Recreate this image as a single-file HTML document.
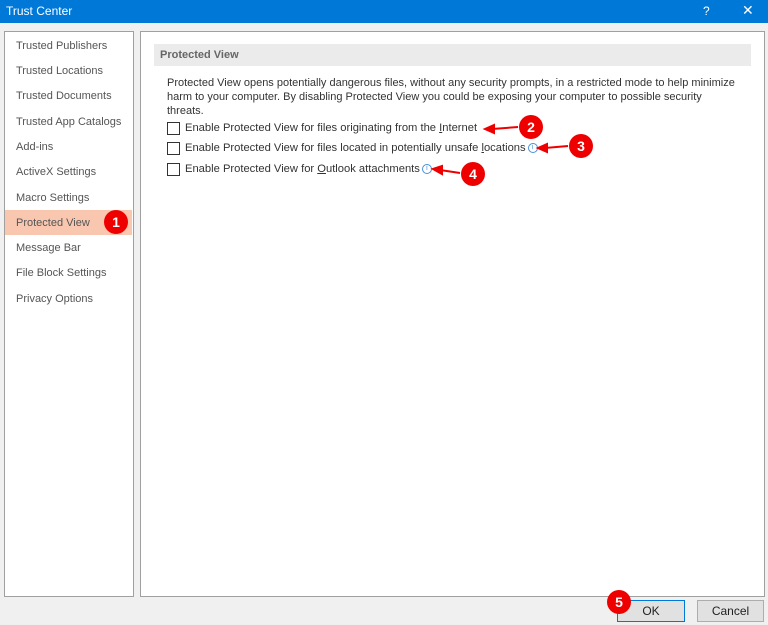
<!DOCTYPE html>
<html><head><style>
body{margin:0;width:768px;height:625px;background:#f0f0f0;font-family:"Liberation Sans",sans-serif;font-size:11px;color:#222;position:relative;overflow:hidden}
.t{position:absolute;left:0;top:0;width:768px;height:23px;background:#0078d7;color:#fff;font-size:12px}
.p{position:absolute;background:#fff;border:1px solid #a0a0a0}
.nav{position:absolute;left:16px;color:#555;font-size:11px}
.a{position:absolute;color:#333;white-space:nowrap}
.x{font-size:11.2px}
.cb{position:absolute;width:11px;height:11px;border:1px solid #333;background:#fff}
.c{position:absolute;width:24px;height:24px;border-radius:50%;background:#e00;color:#fff;font-weight:bold;font-size:14px;text-align:center;line-height:24px}
.i{display:inline-block;width:8px;height:8px;border:1px solid #4a90d9;border-radius:50%;font-size:7px;line-height:8px;text-align:center;color:#4a90d9;vertical-align:2px;margin-left:2px}
.b{position:absolute;top:600px;height:20px;border:1px solid #adadad;background:#e1e1e1;text-align:center;line-height:20px;font-size:12px;color:#222}
</style></head><body>
<div class="t"><span style="position:absolute;left:6px;top:4px">Trust Center</span><span style="position:absolute;left:703px;top:4px">?</span><span style="position:absolute;left:742px;top:2px;font-size:14px">✕</span></div>
<div class="p" style="left:4px;top:31px;width:128px;height:564px"></div>
<div style="position:absolute;left:5px;top:210px;width:127px;height:25px;background:#f9c7b0"></div>
<div class="nav" style="top:40px">Trusted Publishers</div>
<div class="nav" style="top:65px">Trusted Locations</div>
<div class="nav" style="top:90px">Trusted Documents</div>
<div class="nav" style="top:116px">Trusted App Catalogs</div>
<div class="nav" style="top:141px">Add-ins</div>
<div class="nav" style="top:166px">ActiveX Settings</div>
<div class="nav" style="top:192px">Macro Settings</div>
<div class="nav" style="top:217px">Protected View</div>
<div class="nav" style="top:242px">Message Bar</div>
<div class="nav" style="top:267px">File Block Settings</div>
<div class="nav" style="top:293px">Privacy Options</div>
<div class="c" style="left:104px;top:210px">1</div>
<div class="p" style="left:140px;top:31px;width:623px;height:564px"></div>
<div style="position:absolute;left:154px;top:44px;width:597px;height:22px;background:#ebebeb;color:#666;font-weight:bold;line-height:22px;text-indent:6px">Protected View</div>
<div class="a" style="left:167px;top:76px;line-height:14px">Protected View opens potentially dangerous files, without any security prompts, in a restricted mode to help minimize<br>harm to your computer. By disabling Protected View you could be exposing your computer to possible security<br>threats.</div>
<div class="cb" style="left:167px;top:122px"></div><div class="a x" style="left:185px;top:122px">Enable Protected View for files originating from the <u>I</u>nternet</div>
<div class="cb" style="left:167px;top:142px"></div><div class="a x" style="left:185px;top:142px">Enable Protected View for files located in potentially unsafe <u>l</u>ocations<span class="i">i</span></div>
<div class="cb" style="left:167px;top:163px"></div><div class="a x" style="left:185px;top:163px">Enable Protected View for <u>O</u>utlook attachments<span class="i">i</span></div>
<svg style="position:absolute;left:0;top:0" width="768" height="625">
<g stroke="#e00" stroke-width="2" fill="#e00">
<line x1="518" y1="127" x2="492" y2="129"/><path d="M485 129l9-4v8z"/>
<line x1="568" y1="146" x2="545" y2="148"/><path d="M538 148l9-4v8z"/>
<line x1="460" y1="173" x2="440" y2="170"/><path d="M433 169l9-3v8z"/>
</g></svg>
<div class="c" style="left:519px;top:115px">2</div>
<div class="c" style="left:569px;top:134px">3</div>
<div class="c" style="left:461px;top:162px">4</div>
<div class="b" style="left:617px;width:66px;border:1px solid #0078d7">OK</div>
<div class="b" style="left:697px;width:65px">Cancel</div>
<div class="c" style="left:607px;top:590px">5</div>
</body></html>
